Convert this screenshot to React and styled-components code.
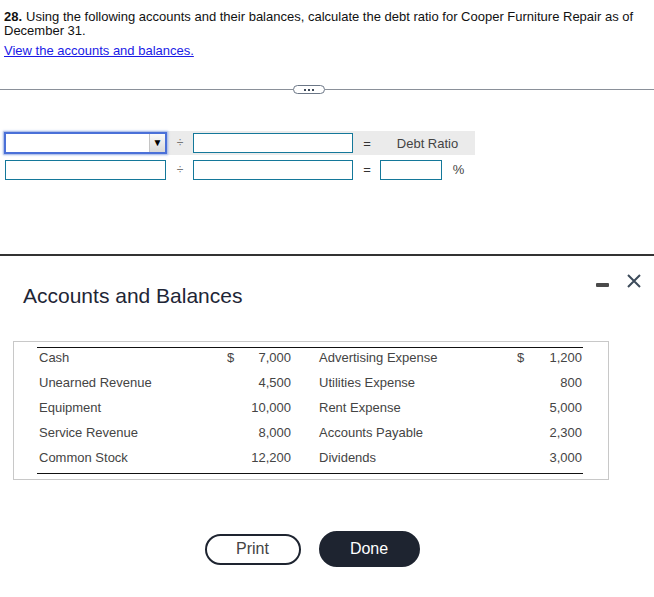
import React from "react";
import styled, { createGlobalStyle } from "styled-components";

const GlobalStyle = createGlobalStyle`
  html, body {
    margin: 0;
    padding: 0;
    background: #fff;
  }
  body {
    font-family: "Liberation Sans", Arial, sans-serif;
    color: #111;
  }
  * {
    box-sizing: border-box;
  }
`;

const Page = styled.div`
  width: 654px;
  min-height: 597px;
  overflow: hidden;
`;

const Question = styled.div`
  padding: 10px 4px 0;
  font-size: 13px;
  line-height: 14px;
`;

const QuestionText = styled.p`
  margin: 0;
  color: #111;
`;

const Num = styled.span`
  font-weight: 700;
  margin-right: 4px;
`;

const ViewLink = styled.a`
  display: inline-block;
  margin-top: 6px;
  color: #1a1ae6;
  text-decoration: underline;
  cursor: pointer;
`;

const Divider = styled.div`
  display: grid;
  grid-template-columns: 293px auto 1fr;
  align-items: center;
  margin-top: 27px;
`;

const Line = styled.div`
  height: 1px;
  background: #8a9099;
`;

const Pill = styled.div`
  width: 32px;
  height: 9px;
  border: 1.5px solid #6b7686;
  border-radius: 5px;
  display: flex;
  align-items: center;
  justify-content: center;
  gap: 2px;
  background: #fff;
`;

const Dot = styled.span`
  width: 2px;
  height: 2px;
  background: #3f4a5a;
`;

const Formula = styled.div`
  margin: 37px 0 0 3px;
  width: 472px;
`;

const FRow = styled.div`
  display: flex;
  align-items: center;
  height: ${(p) => (p.$shaded ? "24px" : "25px")};
  margin-top: ${(p) => (p.$shaded ? "0" : "2px")};
  background: ${(p) => (p.$shaded ? "#ebebeb" : "transparent")};
`;

const Cell = styled.div`
  width: ${(p) => p.$w}px;
  display: flex;
  align-items: center;
  justify-content: ${(p) => p.$justify || "flex-start"};
  padding-left: ${(p) => p.$pad || 0}px;
`;

const Op = styled.span`
  font-size: ${(p) => (p.$small ? "12px" : "13px")};
  color: ${(p) => (p.$small ? "#777" : "#333")};
`;

const SelectBox = styled.div`
  width: 163px;
  height: 22px;
  border: 2px solid #4a70d8;
  box-shadow: 0 0 2px 1px rgba(90, 130, 230, 0.55);
  background: #fff;
  display: flex;
  align-items: center;
  justify-content: flex-end;
`;

const ArrowButton = styled.div`
  width: 16px;
  height: 18px;
  border-left: 1px solid #c4c4c4;
  background: linear-gradient(#fafafa, #d9d9d9);
  display: flex;
  align-items: center;
  justify-content: center;
  font-size: 10px;
  color: #000;
  line-height: 1;
`;

const Field = styled.input`
  width: ${(p) => p.$w}px;
  height: 20px;
  border: 1px solid #14789a;
  margin: 0 0 0 ${(p) => p.$ml || 0}px;
  padding: 0 3px;
  font: inherit;
  outline: none;
  background: #fff;
`;

const Caption = styled.span`
  font-size: 13px;
  color: #444;
`;

const Percent = styled.span`
  flex: 1;
  text-align: center;
  font-size: 13px;
  color: #444;
`;

const DarkRule = styled.div`
  height: 2px;
  background: #333;
  margin-top: 72px;
`;

const Panel = styled.div`
  padding: 18px 13px 0 13px;
`;

const PanelHead = styled.div`
  display: flex;
  justify-content: space-between;
  align-items: flex-start;
`;

const PanelTitle = styled.h2`
  margin: 0;
  padding: 10px 0 0 10px;
  font-size: 21px;
  line-height: 24px;
  font-weight: 400;
  color: #1e2636;
`;

const Controls = styled.div`
  display: flex;
  align-items: center;
  gap: 18px;
  height: 14px;
`;

const Minus = styled.span`
  width: 13px;
  height: 4px;
  border-radius: 1px;
  background: #4a4a4a;
  margin-top: 7px;
`;

const CloseIcon = styled.svg`
  width: 14px;
  height: 14px;
  display: block;
`;

const TableBox = styled.div`
  margin-top: 33px;
  width: 596px;
  border: 1px solid #c8c8c8;
  padding: 5px 0 5px 23px;
`;

const Table = styled.div`
  width: 546px;
  border-top: 1.5px solid #111;
  border-bottom: 1.5px solid #111;
  display: grid;
  grid-template-columns: 186px 12px 56px 221px 12px 59px;
  font-size: 13px;
  color: #444;
`;

const TCell = styled.div`
  height: 25px;
  padding-top: 2px;
  line-height: 15px;
  text-align: ${(p) => p.$align || "left"};
  padding-left: ${(p) => p.$pad || 0}px;
  padding-right: ${(p) => p.$padR || 0}px;
  white-space: nowrap;
`;

const Buttons = styled.div`
  width: 596px;
  margin-top: 51px;
  display: flex;
  justify-content: center;
  align-items: center;
  gap: 18px;
  padding-left: 2px;
`;

const Button = styled.button`
  font-family: "Liberation Sans", Arial, sans-serif;
  font-size: 16px;
  border-radius: 18px;
  cursor: pointer;
  width: ${(p) => (p.$primary ? "101px" : "96px")};
  height: ${(p) => (p.$primary ? "36px" : "31px")};
  border: 2px solid #1e2430;
  background: ${(p) => (p.$primary ? "#1e2430" : "#fff")};
  color: ${(p) => (p.$primary ? "#fff" : "#444")};
  padding: 0;
`;

const rows = [
  ["Cash", "$", "7,000", "Advertising Expense", "$", "1,200"],
  ["Unearned Revenue", "", "4,500", "Utilities Expense", "", "800"],
  ["Equipment", "", "10,000", "Rent Expense", "", "5,000"],
  ["Service Revenue", "", "8,000", "Accounts Payable", "", "2,300"],
  ["Common Stock", "", "12,200", "Dividends", "", "3,000"],
];

export default function App() {
  return (
    <Page>
      <GlobalStyle />
      <Question>
        <QuestionText>
          <Num>28.</Num>
          <span>
            Using the following accounts and their balances, calculate the
            debt ratio for Cooper Furniture Repair as of December 31.
          </span>
        </QuestionText>
        <ViewLink>View the accounts and balances.</ViewLink>
      </Question>

      <Divider>
        <Line />
        <Pill>
          <Dot />
          <Dot />
          <Dot />
        </Pill>
        <Line />
      </Divider>

      <Formula>
        <FRow $shaded>
          <Cell $w={164} $pad={1}>
            <SelectBox>
              <ArrowButton>▼</ArrowButton>
            </SelectBox>
          </Cell>
          <Cell $w={26} $justify="center">
            <Op $small>÷</Op>
          </Cell>
          <Cell $w={161}>
            <Field $w={160} />
          </Cell>
          <Cell $w={26} $justify="center">
            <Op>=</Op>
          </Cell>
          <Cell $w={95} $justify="center">
            <Caption>Debt Ratio</Caption>
          </Cell>
        </FRow>
        <FRow>
          <Cell $w={164}>
            <Field $w={161} $ml={2} />
          </Cell>
          <Cell $w={26} $justify="center">
            <Op $small>÷</Op>
          </Cell>
          <Cell $w={161}>
            <Field $w={160} />
          </Cell>
          <Cell $w={26} $justify="center">
            <Op>=</Op>
          </Cell>
          <Cell $w={95}>
            <Field $w={62} />
            <Percent>%</Percent>
          </Cell>
        </FRow>
      </Formula>

      <DarkRule />

      <Panel>
        <PanelHead>
          <PanelTitle>Accounts and Balances</PanelTitle>
          <Controls>
            <Minus />
            <CloseIcon viewBox="0 0 14 14">
              <path
                d="M1 1 L13 13 M13 1 L1 13"
                stroke="#3d4b5b"
                strokeWidth="2"
                fill="none"
              />
            </CloseIcon>
          </Controls>
        </PanelHead>

        <TableBox>
          <Table>
            {rows.map((r) => (
              <React.Fragment key={r[0]}>
                <TCell $pad={2}>{r[0]}</TCell>
                <TCell $pad={4}>{r[1]}</TCell>
                <TCell $align="right">{r[2]}</TCell>
                <TCell $pad={28}>{r[3]}</TCell>
                <TCell $pad={5}>{r[4]}</TCell>
                <TCell $align="right" $padR={1}>
                  {r[5]}
                </TCell>
              </React.Fragment>
            ))}
          </Table>
        </TableBox>

        <Buttons>
          <Button>Print</Button>
          <Button $primary>Done</Button>
        </Buttons>
      </Panel>
    </Page>
  );
}
